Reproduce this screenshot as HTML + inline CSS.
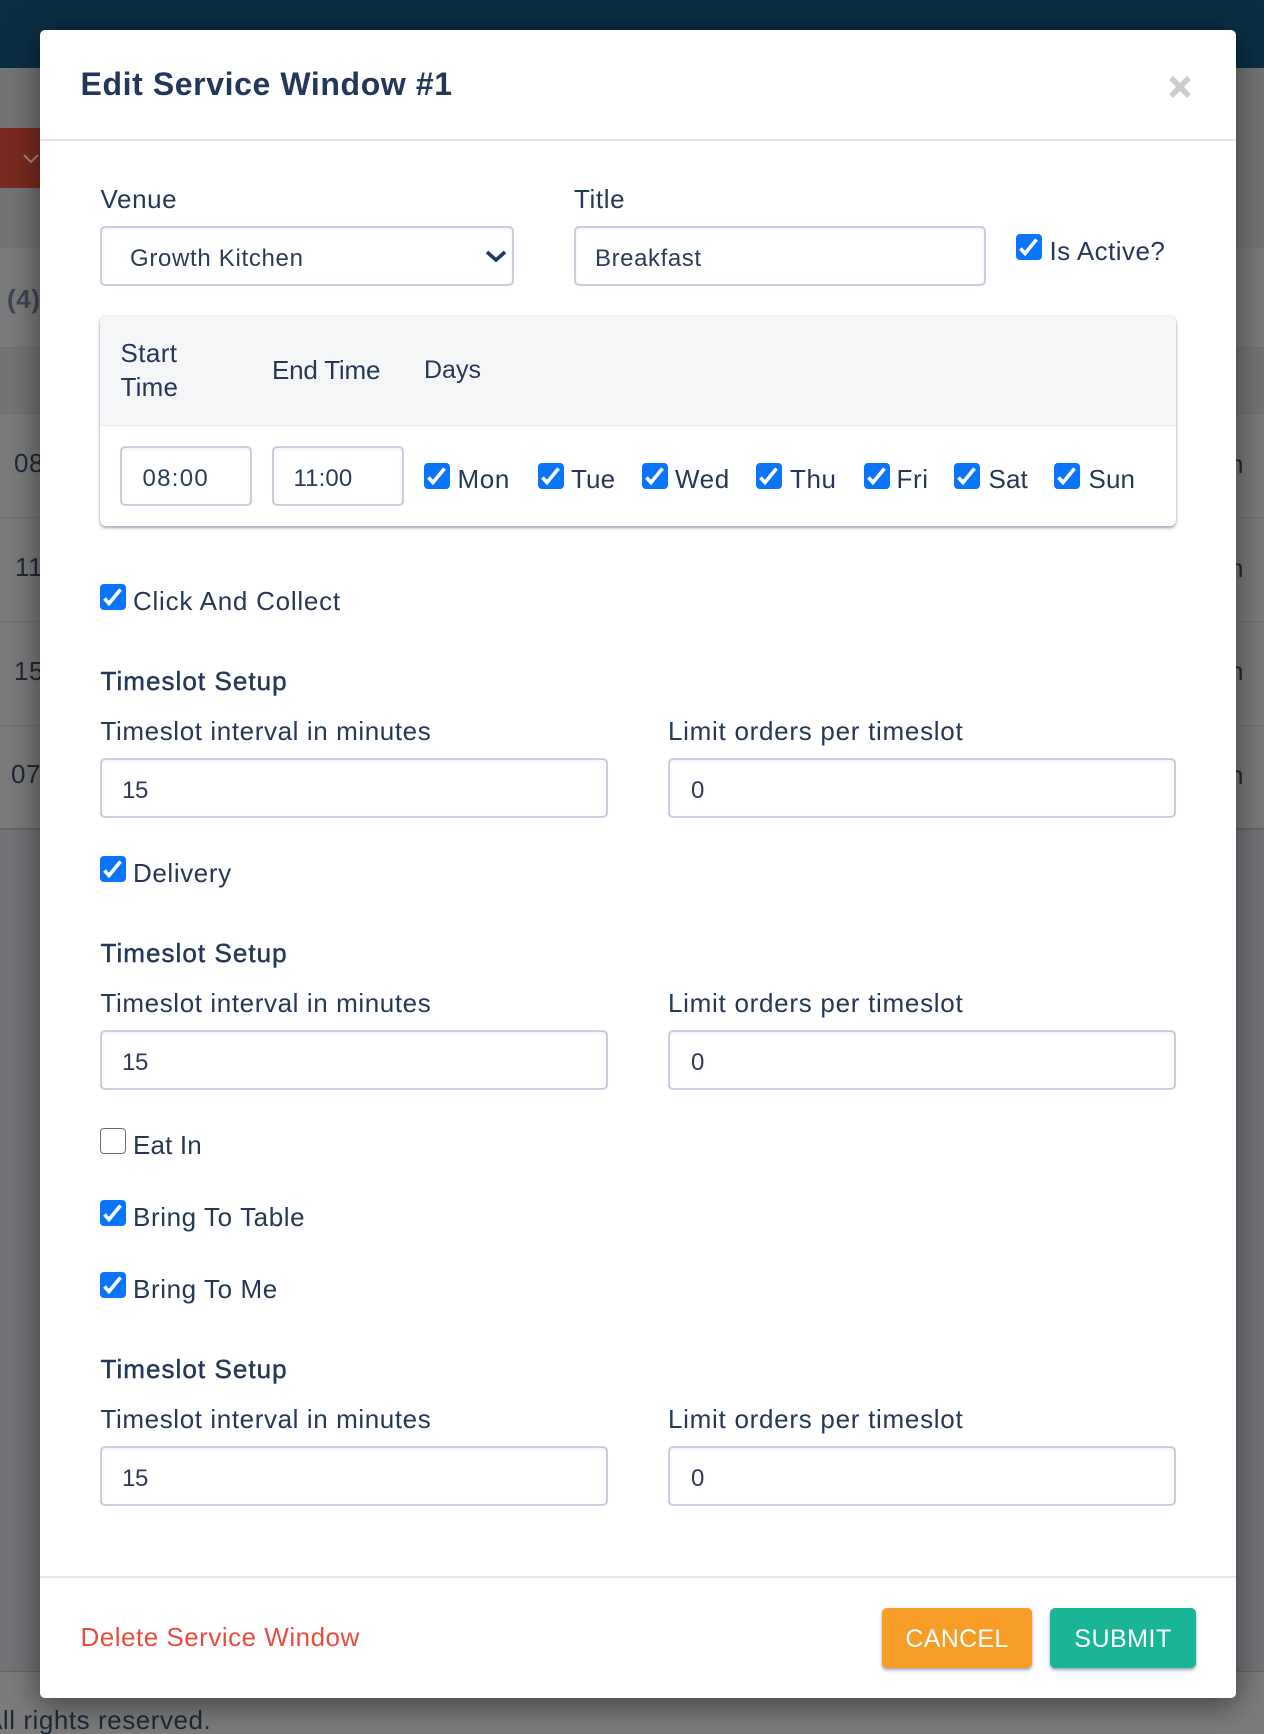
<!DOCTYPE html>
<html lang="en">
<head>
<meta charset="utf-8">
<title>Edit Service Window</title>
<style>
html,body{margin:0;padding:0;width:1264px;height:1734px;overflow:hidden;background:#7a7a7a;font-family:"Liberation Sans",sans-serif;color:#253858}
#p{position:relative;width:1264px;height:1734px;overflow:hidden;contain:paint}
.a{position:absolute}
.t{position:absolute;font-size:26px;line-height:30px;letter-spacing:.6px;white-space:nowrap}
.b{-webkit-text-stroke:.45px #253858;letter-spacing:1.05px}
.l{letter-spacing:.72px}
.v{font-size:24px;color:#2b3c5a}
.i{position:absolute;box-sizing:border-box;height:60px;border:2px solid #c8cede;border-radius:5px;background:#fff;box-shadow:inset 0 2px 3px rgba(40,50,90,.06)}
.c{position:absolute;width:26px;height:26px}
.bg{color:#1d2838}
</style>
</head>
<body>
<div id="p">
<!-- background page -->
<div class="a" style="left:0;top:0;width:1264px;height:68px;background:#0a2f44"></div>
<div class="a" style="left:0;top:68px;width:1264px;height:180px;background:#727476"></div>
<div class="a" style="left:0;top:128px;width:60px;height:60px;background:#7a2a1e"></div>
<div class="t" style="left:-15px;top:134px;color:#a9a09e">n</div>
<svg class="a" style="left:22px;top:152px" width="18" height="14"><path d="M2 3l7 7 7-7" fill="none" stroke="#a38a86" stroke-width="2"/></svg>
<div class="a" style="left:0;top:248px;width:1264px;height:100px;background:#7a7a7a"></div>
<div class="a" style="left:0;top:347px;width:1264px;height:1px;background:#6f7072"></div>
<div class="a" style="left:0;top:348px;width:1264px;height:65px;background:#727476"></div>
<div class="a" style="left:0;top:413px;width:1264px;height:415px;background:#7a7a7a"></div>
<div class="a" style="left:0;top:413px;width:1264px;height:1px;background:#6f7072"></div>
<div class="a" style="left:0;top:517px;width:1264px;height:1px;background:#6f6f6f"></div>
<div class="a" style="left:0;top:621px;width:1264px;height:1px;background:#6f6f6f"></div>
<div class="a" style="left:0;top:725px;width:1264px;height:1px;background:#6f6f6f"></div>
<div class="a" style="left:0;top:828px;width:1264px;height:2px;background:#666"></div>
<div class="a" style="left:0;top:830px;width:1264px;height:841px;background:#727477"></div>
<div class="a" style="left:0;top:1671px;width:1264px;height:1px;background:#666"></div>
<div class="a" style="left:0;top:1672px;width:1264px;height:62px;background:#7b7b7b"></div>
<div class="t" style="left:7px;top:284px;font-weight:bold;color:#3c4654">(4)</div>
<div class="t bg" style="left:14px;top:448px">08</div>
<div class="t bg" style="left:15px;top:552px">11</div>
<div class="t bg" style="left:14px;top:656px">15</div>
<div class="t bg" style="left:11px;top:759px">07</div>
<div class="t bg" style="left:1229px;top:449px">n</div>
<div class="t bg" style="left:1229px;top:553px">n</div>
<div class="t bg" style="left:1229px;top:656px">n</div>
<div class="t bg" style="left:1229px;top:760px">n</div>
<div class="t bg" style="left:-15px;top:1704px;height:30px;line-height:32px;letter-spacing:.55px">All rights reserved.</div>

<!-- modal -->
<div class="a" style="left:40px;top:30px;width:1196px;height:1668px;background:#fff;border-radius:5px;box-shadow:0 6px 32px rgba(0,0,0,.5)"></div>
<div class="t" style="left:80.5px;top:64px;font-size:32px;line-height:40px;font-weight:bold;letter-spacing:.6px;color:#22375a">Edit Service Window #1</div>
<svg class="a" style="left:1167px;top:74px" width="26" height="26"><path d="M4 4L22 22M22 4L4 22" stroke="#cccccc" stroke-width="5.5" fill="none"/></svg>
<div class="a" style="left:40px;top:139px;width:1196px;height:2px;background:#e7e7e7"></div>

<div class="t" style="left:100.5px;top:184px">Venue</div>
<div class="t" style="left:574px;top:184px">Title</div>
<div class="i" style="left:100px;top:226px;width:414px"></div>
<div class="t v" style="left:130px;top:244px;letter-spacing:.68px">Growth Kitchen</div>
<svg class="a" style="left:484px;top:248px" width="24" height="18"><path d="M3 4l9 8 9-8" fill="none" stroke="#1f3a63" stroke-width="3.6"/></svg>
<div class="i" style="left:574px;top:226px;width:412px"></div>
<div class="t v" style="left:595px;top:244px;letter-spacing:.58px">Breakfast</div>
<svg class="c" style="left:1016px;top:234px" viewBox="0 0 26 26"><rect width="26" height="26" rx="4" fill="#0a74fb"/><path d="M4.5 14.5l4.5 5L20.5 5.5" fill="none" stroke="#fff" stroke-width="3.6"/></svg>
<div class="t" style="left:1049.5px;top:236px;letter-spacing:.45px">Is Active?</div>

<!-- time card -->
<div class="a" style="left:100px;top:316px;width:1076px;height:210px;background:#fff;border-radius:6px;box-shadow:0 2px 3px rgba(90,100,130,.55),0 0 2px rgba(90,100,130,.2)"></div>
<div class="a" style="left:100px;top:316px;width:1076px;height:109px;background:#f5f6f8;border-radius:6px 6px 0 0"></div>
<div class="a" style="left:100px;top:425px;width:1076px;height:1px;background:#ebecf0"></div>
<div class="t" style="left:120.5px;top:338px;letter-spacing:.4px">Start</div>
<div class="t" style="left:120.5px;top:372px;letter-spacing:.2px">Time</div>
<div class="t" style="left:272px;top:355px;letter-spacing:-.2px">End Time</div>
<div class="t" style="left:424px;top:355px;font-size:25px;letter-spacing:0">Days</div>
<div class="i" style="left:120px;top:446px;width:132px"></div>
<div class="t v" style="left:142.5px;top:464px;letter-spacing:1.3px">08:00</div>
<div class="i" style="left:272px;top:446px;width:132px"></div>
<div class="t v" style="left:293.5px;top:464px;letter-spacing:.1px">11:00</div>

<svg class="c" style="left:424px;top:463px" viewBox="0 0 26 26"><rect width="26" height="26" rx="4" fill="#0a74fb"/><path d="M4.5 14.5l4.5 5L20.5 5.5" fill="none" stroke="#fff" stroke-width="3.6"/></svg>
<div class="t" style="left:457.5px;top:464px">Mon</div>
<svg class="c" style="left:538px;top:463px" viewBox="0 0 26 26"><rect width="26" height="26" rx="4" fill="#0a74fb"/><path d="M4.5 14.5l4.5 5L20.5 5.5" fill="none" stroke="#fff" stroke-width="3.6"/></svg>
<div class="t" style="left:571px;top:464px;letter-spacing:.1px">Tue</div>
<svg class="c" style="left:642px;top:463px" viewBox="0 0 26 26"><rect width="26" height="26" rx="4" fill="#0a74fb"/><path d="M4.5 14.5l4.5 5L20.5 5.5" fill="none" stroke="#fff" stroke-width="3.6"/></svg>
<div class="t" style="left:675px;top:464px">Wed</div>
<svg class="c" style="left:756px;top:463px" viewBox="0 0 26 26"><rect width="26" height="26" rx="4" fill="#0a74fb"/><path d="M4.5 14.5l4.5 5L20.5 5.5" fill="none" stroke="#fff" stroke-width="3.6"/></svg>
<div class="t" style="left:790px;top:464px">Thu</div>
<svg class="c" style="left:864px;top:463px" viewBox="0 0 26 26"><rect width="26" height="26" rx="4" fill="#0a74fb"/><path d="M4.5 14.5l4.5 5L20.5 5.5" fill="none" stroke="#fff" stroke-width="3.6"/></svg>
<div class="t" style="left:896.5px;top:464px">Fri</div>
<svg class="c" style="left:954px;top:463px" viewBox="0 0 26 26"><rect width="26" height="26" rx="4" fill="#0a74fb"/><path d="M4.5 14.5l4.5 5L20.5 5.5" fill="none" stroke="#fff" stroke-width="3.6"/></svg>
<div class="t" style="left:988.5px;top:464px;letter-spacing:.1px">Sat</div>
<svg class="c" style="left:1054px;top:463px" viewBox="0 0 26 26"><rect width="26" height="26" rx="4" fill="#0a74fb"/><path d="M4.5 14.5l4.5 5L20.5 5.5" fill="none" stroke="#fff" stroke-width="3.6"/></svg>
<div class="t" style="left:1088.5px;top:464px;letter-spacing:.1px">Sun</div>

<!-- Click and collect -->
<svg class="c" style="left:100px;top:584px" viewBox="0 0 26 26"><rect width="26" height="26" rx="4" fill="#0a74fb"/><path d="M4.5 14.5l4.5 5L20.5 5.5" fill="none" stroke="#fff" stroke-width="3.6"/></svg>
<div class="t" style="left:133px;top:586px;letter-spacing:.75px">Click And Collect</div>
<div class="t b" style="left:100.5px;top:666px">Timeslot Setup</div>
<div class="t" style="left:100.5px;top:716px">Timeslot interval in minutes</div>
<div class="t l" style="left:668px;top:716px">Limit orders per timeslot</div>
<div class="i" style="left:100px;top:758px;width:508px"></div>
<div class="t v" style="left:122px;top:776px;letter-spacing:-.4px">15</div>
<div class="i" style="left:668px;top:758px;width:508px"></div>
<div class="t v" style="left:691px;top:776px">0</div>

<!-- Delivery -->
<svg class="c" style="left:100px;top:856px" viewBox="0 0 26 26"><rect width="26" height="26" rx="4" fill="#0a74fb"/><path d="M4.5 14.5l4.5 5L20.5 5.5" fill="none" stroke="#fff" stroke-width="3.6"/></svg>
<div class="t" style="left:133px;top:858px">Delivery</div>
<div class="t b" style="left:100.5px;top:938px">Timeslot Setup</div>
<div class="t" style="left:100.5px;top:988px">Timeslot interval in minutes</div>
<div class="t l" style="left:668px;top:988px">Limit orders per timeslot</div>
<div class="i" style="left:100px;top:1030px;width:508px"></div>
<div class="t v" style="left:122px;top:1048px;letter-spacing:-.4px">15</div>
<div class="i" style="left:668px;top:1030px;width:508px"></div>
<div class="t v" style="left:691px;top:1048px">0</div>

<!-- Eat in -->
<div class="c" style="left:100px;top:1128px;box-sizing:border-box;border:1.5px solid #6f6f6f;border-radius:4px;background:#fff"></div>
<div class="t" style="left:133px;top:1130px;letter-spacing:.15px">Eat In</div>
<svg class="c" style="left:100px;top:1200px" viewBox="0 0 26 26"><rect width="26" height="26" rx="4" fill="#0a74fb"/><path d="M4.5 14.5l4.5 5L20.5 5.5" fill="none" stroke="#fff" stroke-width="3.6"/></svg>
<div class="t" style="left:133px;top:1202px">Bring To Table</div>
<svg class="c" style="left:100px;top:1272px" viewBox="0 0 26 26"><rect width="26" height="26" rx="4" fill="#0a74fb"/><path d="M4.5 14.5l4.5 5L20.5 5.5" fill="none" stroke="#fff" stroke-width="3.6"/></svg>
<div class="t" style="left:133px;top:1274px">Bring To Me</div>
<div class="t b" style="left:100.5px;top:1354px">Timeslot Setup</div>
<div class="t" style="left:100.5px;top:1404px">Timeslot interval in minutes</div>
<div class="t l" style="left:668px;top:1404px">Limit orders per timeslot</div>
<div class="i" style="left:100px;top:1446px;width:508px"></div>
<div class="t v" style="left:122px;top:1464px;letter-spacing:-.4px">15</div>
<div class="i" style="left:668px;top:1446px;width:508px"></div>
<div class="t v" style="left:691px;top:1464px">0</div>

<!-- footer -->
<div class="a" style="left:40px;top:1576px;width:1196px;height:2px;background:#e7e7e7"></div>
<div class="t" style="left:80.5px;top:1622px;color:#e74c3c;letter-spacing:.5px">Delete Service Window</div>
<div class="a" style="left:882px;top:1608px;width:150px;height:60px;background:#f79d27;border-radius:5px;box-shadow:0 2px 3px rgba(90,100,140,.6);color:#fff;font-size:25px;line-height:62px;text-align:center;letter-spacing:.3px">CANCEL</div>
<div class="a" style="left:1050px;top:1608px;width:146px;height:60px;background:#1ab596;border-radius:5px;box-shadow:0 2px 3px rgba(90,100,140,.6);color:#fff;font-size:25px;line-height:62px;text-align:center;letter-spacing:.5px">SUBMIT</div>
</div>
</body>
</html>
